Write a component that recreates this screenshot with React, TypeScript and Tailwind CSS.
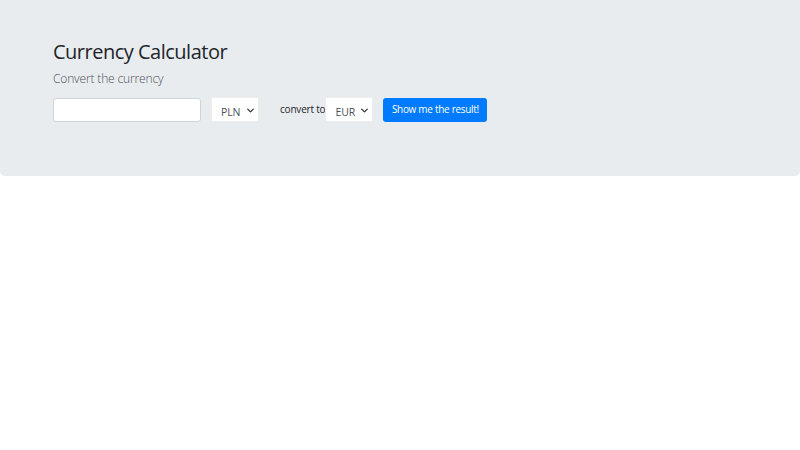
import React, { useState } from 'react'

const Chevron = () => (
  <svg viewBox="0 0 10 6" className="w-[7px] h-[5px] text-[#333]" fill="none" stroke="currentColor" strokeWidth="1.8">
    <path d="M1 1l4 4 4-4" strokeLinecap="round" strokeLinejoin="round" />
  </svg>
)

interface PickerProps {
  value: string
  options: string[]
  onChange: (v: string) => void
}

const Picker = (props: PickerProps) => (
  <div className="relative w-[48px] h-[25px] bg-white border border-[#eceef0] rounded-[2px]">
    <select
      value={props.value}
      onChange={(e) => props.onChange(e.target.value)}
      className="appearance-none w-full h-full bg-transparent pl-[9px] pr-[12px] text-[10.5px] tracking-[-0.1px] text-[#495057] outline-none"
    >
      {props.options.map((o) => (
        <option key={o}>{o}</option>
      ))}
    </select>
    <span className="absolute right-[4px] top-[10px] pointer-events-none flex">
      <Chevron />
    </span>
  </div>
)

export default function App() {
  const [amount, setAmount] = useState('')
  const [from, setFrom] = useState('PLN')
  const [to, setTo] = useState('EUR')

  return (
    <div className="w-[800px] h-[450px] bg-white font-['Open_Sans',sans-serif]">
      {/* jumbotron */}
      <div className="h-[176px] bg-[#e9ecef] rounded-b-[5px] pl-[53px] pt-[37px]">
        <h1 className="text-[20px] leading-[30px] text-[#212529] tracking-[-0.5px]">Currency Calculator</h1>
        <p className="text-[12px] leading-[20px] font-light text-[#495057] tracking-[-0.15px] mt-[2px]">
          Convert the currency
        </p>
        <div className="flex items-center mt-[8px]">
          <input
            value={amount}
            onChange={(e) => setAmount(e.target.value)}
            className="w-[148px] h-[24px] bg-white border border-[#ced4da] rounded-[3px] px-2 text-[11px] outline-none"
          />
          <div className="ml-[10px]">
            <Picker value={from} options={['PLN', 'USD', 'EUR', 'GBP']} onChange={setFrom} />
          </div>
          <span className="ml-[21px] text-[10px] tracking-[-0.2px] text-[#212529]">convert to</span>
          <Picker value={to} options={['EUR', 'PLN', 'USD', 'GBP']} onChange={setTo} />
          <button className="ml-[10px] w-[104px] h-[24px] bg-[#007bff] text-white text-[10px] tracking-[-0.3px] rounded-[3px]">
            Show me the result!
          </button>
        </div>
      </div>
    </div>
  )
}
